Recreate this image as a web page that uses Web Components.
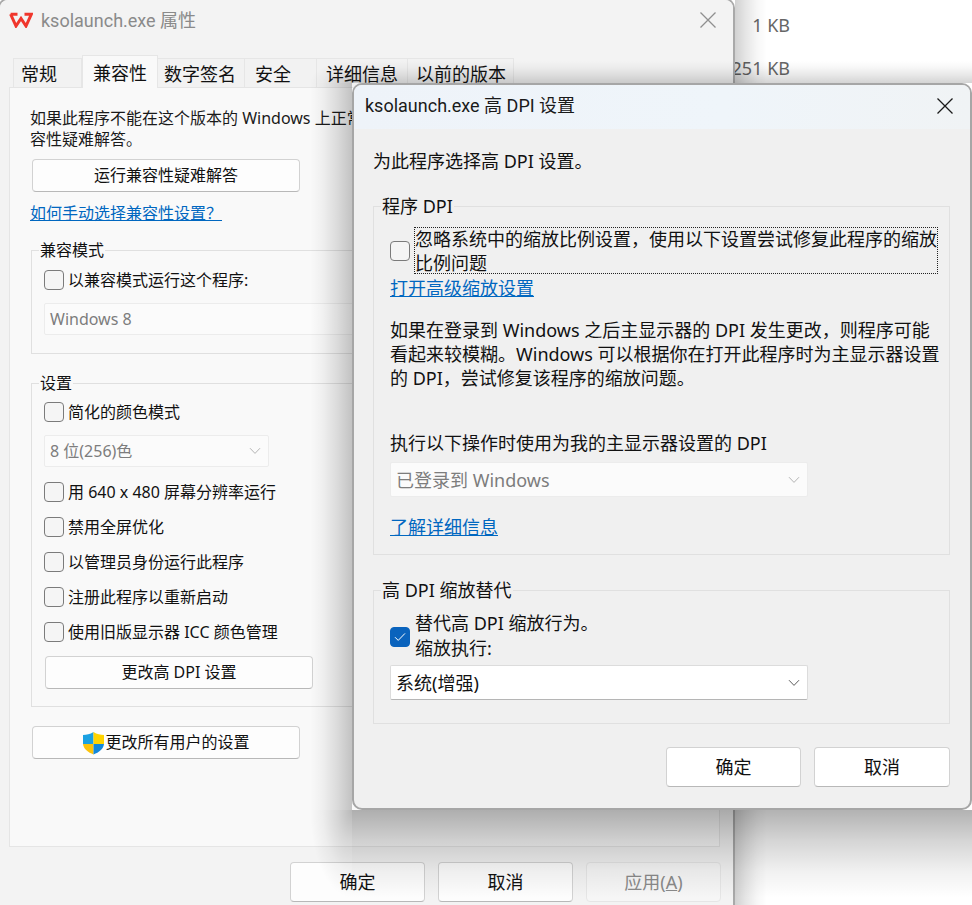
<!DOCTYPE html>
<html lang="zh">
<head>
<meta charset="utf-8">
<title>ksolaunch.exe</title>
<style>
  html, body { margin: 0; height: 905px; overflow: hidden; background: #fff; }
  body { position: relative; font-family: "Noto Sans", "Noto Sans CJK SC", sans-serif; color: #111; }
  .sizes { position: absolute; left: 690px; top: 0; width: 100px; text-align: right; font-size: 18px; color: #666; }
  .sizes div { height: 43px; line-height: 50px; }
</style>
</head>
<body>

<div class="sizes"><div>1 KB</div><div>251 KB</div></div>

<win-shadow style="--left:-2px;--top:-2px;--w:737px;--h:942px;--sl:0px;--st:0px;--sr:32px;--sb:0px;--a-top:.18;--a-tc:.18;--a-side:.18;--a-bc:.18;--a-bot:.18;--z:1"></win-shadow>

<!-- properties window, behind -->
<win-window style="--left:-2px;--top:-2px;--w:737px;--h:942px;--fs:16px;--lh:21px;--bg:#f3f3f3;--title-bg:#f3f3f3;--title-h:46px;--title-pb:6px;--title-color:#8a8a8a;--close:#8f8f8f;--title-pad:9px;--border:#a9a9a9;--z:2">
  <svg slot="icon" width="24" height="16" viewBox="0 0 24 16" style="margin-right:8px">
    <path d="M1.6 2.2H8.5M1.6 2.2L7 14L12 6.5L17 14L22.4 2.2H15.5" fill="none" stroke="#f0362c" stroke-width="3" stroke-linejoin="miter"/>
  </svg>
  <span slot="title">ksolaunch.exe 属性</span>

  <win-tabs>
    <win-tab style="--w:69px">常规</win-tab>
    <win-tab active style="--w:76px;--pad:10px">兼容性</win-tab>
    <win-tab style="--w:87px;--pad:6px">数字签名</win-tab>
    <win-tab style="--w:72px;--pad:10px">安全</win-tab>
    <win-tab style="--w:91px;--pad:9px">详细信息</win-tab>
    <win-tab style="--w:106px;--pad:8px">以前的版本</win-tab>
  </win-tabs>

  <tab-page>
    <div style="margin-left:20px;height:42px;white-space:nowrap;color:#1a1a1a">如果此程序不能在这个版本的 Windows 上正常<br>容性疑难解答。</div>
    <win-button style="--w:268px;--h:33px;margin:9px 0 0 22px">运行兼容性疑难解答</win-button>
    <win-link style="margin:11px 0 0 20px;font-size:16px;height:21px">如何手动选择兼容性设置？</win-link>

    <group-box legend="兼容模式" style="margin:26px 14px 0 21px;height:104px;--legend-left:7px">
      <win-check style="margin:19px 0 0 12px;--gap:4px">以兼容模式运行这个程序:</win-check>
      <win-select disabled style="--w:640px;--h:32px;margin:13px 0 0 12px">Windows 8</win-select>
    </group-box>

    <group-box legend="设置" style="margin:29px 14px 0 21px;height:324px;--legend-left:7px">
      <win-check style="margin:18px 0 0 12px">简化的颜色模式</win-check>
      <win-select disabled style="--w:225px;--h:32px;margin:13px 0 0 12px">8 位(256)色</win-select>
      <win-check style="margin:15px 0 0 12px">用 640 x 480 屏幕分辨率运行</win-check>
      <win-check style="margin:15px 0 0 12px">禁用全屏优化</win-check>
      <win-check style="margin:15px 0 0 12px">以管理员身份运行此程序</win-check>
      <win-check style="margin:15px 0 0 12px">注册此程序以重新启动</win-check>
      <win-check style="margin:15px 0 0 12px">使用旧版显示器 ICC 颜色管理</win-check>
      <win-button style="--w:268px;--h:33px;margin:14px 0 0 13px">更改高 DPI 设置</win-button>
    </group-box>

    <win-button style="--w:268px;--h:33px;margin:19px 0 0 22px">
      <svg width="23" height="24" viewBox="0 0 23 24">
        <path d="M11.5 1C8 3.2 4.5 4 1 4V13H11.5Z" fill="#1ba1e2"/>
        <path d="M11.5 1C15 3.2 18.5 4 22 4V13H11.5Z" fill="#ffd400"/>
        <path d="M1 13C1.6 18 6 21.4 11.5 23.4V13Z" fill="#fcc30b"/>
        <path d="M22 13C21.4 18 17 21.4 11.5 23.4V13Z" fill="#1188dc"/>
      </svg>更改所有用户的设置</win-button>
  </tab-page>

  <div style="display:flex;gap:13px;margin:15px 0 0 290px;font-size:18px">
    <win-button style="--w:135px;--h:40px">确定</win-button>
    <win-button style="--w:135px;--h:40px">取消</win-button>
    <win-button disabled style="--w:135px;--h:40px">应用(<u>A</u>)</win-button>
  </div>
</win-window>

<win-shadow style="--left:352px;--top:83px;--w:620px;--h:727px;--sl:42px;--st:22px;--sr:8px;--sb:88px;--a-top:.17;--a-tc:.195;--a-side:.22;--a-bc:.26;--a-bot:.3;--z:3"></win-shadow>

<!-- high dpi dialog, in front -->
<win-window style="--left:352px;--top:83px;--w:620px;--h:727px;--fs:18px;--lh:24px;--bg:#f0f0f0;--title-bg:linear-gradient(90deg,#eef3f9,#eff5fa 60%,#f0f3f5);--title-h:44px;--title-pb:3px;--title-color:#1a1a1a;--close:#1a1a1a;--title-pad:11px;--border:#a6a6a6;--z:4">
  <span slot="title">ksolaunch.exe 高 DPI 设置</span>

  <div style="margin:20px 0 0 19px;height:24px">为此程序选择高 DPI 设置。</div>

  <group-box legend="程序 DPI" style="margin:33px 20px 0 19px;height:349px;--legend-left:7px;--legend-bg:#f0f0f0">
    <div style="display:flex;align-items:center;margin:21px 0 0 16px">
      <win-check style="--gap:4px"></win-check>
      <div style="flex:none;width:524px;height:47px;box-sizing:border-box;border:1px dotted #222;line-height:23.5px;margin-top:-1px">忽略系统中的缩放比例设置，使用以下设置尝试修复此程序的缩放比例问题</div>
    </div>
    <win-link style="margin:2px 0 0 16px;font-size:18px;height:24px">打开高级缩放设置</win-link>
    <div style="margin:18px 0 0 16px;width:556px;height:72px">如果在登录到 Windows 之后主显示器的 DPI 发生更改，则程序可能看起来较模糊。Windows 可以根据你在打开此程序时为主显示器设置的 DPI，尝试修复该程序的缩放问题。</div>
    <div style="margin:41px 0 0 16px;height:24px">执行以下操作时使用为我的主显示器设置的 DPI</div>
    <win-select disabled style="--w:418px;--h:35px;margin:7px 0 0 16px">已登录到 Windows</win-select>
    <win-link style="margin:18px 0 0 16px;font-size:18px;height:24px">了解详细信息</win-link>
  </group-box>

  <group-box legend="高 DPI 缩放替代" style="margin:35px 20px 0 19px;height:134px;--legend-left:7px;--legend-bg:#f0f0f0">
    <div style="display:flex;align-items:center;margin:20px 0 0 16px">
      <win-check checked style="--gap:5px;margin-top:2px"></win-check>
      <div style="height:49px;line-height:24.5px">替代高 DPI 缩放行为。<br>缩放执行:</div>
    </div>
    <win-select style="--w:418px;--h:35px;margin:5px 0 0 16px">系统(增强)</win-select>
  </group-box>

  <div style="display:flex;justify-content:flex-end;gap:13px;margin:23px 20px 0 0">
    <win-button style="--w:135px;--h:40px;--btn-bg:#fff">确定</win-button>
    <win-button style="--w:136px;--h:40px;--btn-bg:#fff">取消</win-button>
  </div>
</win-window>

<script>
class WinWindow extends HTMLElement {
  constructor() {
    super();
    this.attachShadow({ mode: 'open' });
    this.shadowRoot.innerHTML = `
      <style>
        :host {
          display: block; position: absolute; box-sizing: border-box; overflow: hidden;
          left: var(--left); top: var(--top); width: var(--w); height: var(--h);
          z-index: var(--z);
          background: var(--bg); font-size: var(--fs); line-height: var(--lh);
          border: 2px solid var(--border); border-radius: 10px;
        }
        .bar {
          display: flex; align-items: center; box-sizing: border-box; height: var(--title-h);
          padding-left: var(--title-pad); padding-bottom: var(--title-pb); background: var(--title-bg);
          color: var(--title-color); font-size: 18px;
        }
        .title { flex: 1; white-space: nowrap; font-family: Roboto, "Noto Sans CJK SC", sans-serif; }
        .close { width: 18px; height: 18px; margin-right: 16px; }
        .close path { stroke: var(--close); stroke-width: 1.3; fill: none; }
      </style>
      <div class="bar">
        <slot name="icon"></slot>
        <div class="title"><slot name="title"></slot></div>
        <svg class="close" viewBox="0 0 18 18"><path d="M1.5 1.5L16.5 16.5M16.5 1.5L1.5 16.5"/></svg>
      </div>
      <slot></slot>`;
  }
}

// soft window shadow, drawn as gradient strips round the window's rectangle
const fade = a => [[1, 0], [.55, 35], [.18, 70], [0, 100]]
  .map(([k, p]) => `rgba(0,0,0,calc(var(${a}) * ${k})) ${p}%`).join(', ');

class WinShadow extends HTMLElement {
  constructor() {
    super();
    this.attachShadow({ mode: 'open' }).innerHTML = `
      <style>
        :host {
          display: grid; position: absolute; z-index: var(--z); pointer-events: none;
          left: calc(var(--left) - var(--sl)); top: calc(var(--top) - var(--st));
          grid-template-columns: var(--sl) var(--w) var(--sr);
          grid-template-rows: var(--st) var(--h) var(--sb);
        }
        .tl { background: radial-gradient(farthest-side at 100% 100%, ${fade('--a-tc')}); }
        .t  { background: linear-gradient(0deg, ${fade('--a-top')}); }
        .tr { background: radial-gradient(farthest-side at 0 100%, ${fade('--a-tc')}); }
        .l  { background: linear-gradient(270deg, ${fade('--a-side')}); }
        .r  { background: linear-gradient(90deg, ${fade('--a-side')}); }
        .bl { background: radial-gradient(farthest-side at 100% 0, ${fade('--a-bc')}); }
        .b  { background: linear-gradient(180deg, ${fade('--a-bot')}); }
        .br { background: radial-gradient(farthest-side at 0 0, ${fade('--a-bc')}); }
      </style>
      <div class="tl"></div><div class="t"></div><div class="tr"></div>
      <div class="l"></div><div></div><div class="r"></div>
      <div class="bl"></div><div class="b"></div><div class="br"></div>`;
  }
}

class WinTabs extends HTMLElement {
  constructor() {
    super();
    this.attachShadow({ mode: 'open' }).innerHTML = `
      <style>
        :host { display: flex; align-items: flex-end; height: 43px; padding-left: 13px; position: relative; z-index: 1; box-sizing: border-box; margin-top: -2px; }
      </style>
      <slot></slot>`;
  }
}

class WinTab extends HTMLElement {
  constructor() {
    super();
    this.attachShadow({ mode: 'open' }).innerHTML = `
      <style>
        :host {
          display: block; box-sizing: border-box; width: var(--w); height: 29px;
          font-size: 18px; line-height: 31px; padding-left: var(--pad, 7px); white-space: nowrap;
          background: #f2f2f2; border: 1px solid #e6e6e6; border-bottom: 0; border-left-width: 0; color: #111;
        }
        :host(:first-child) { border-left-width: 1px; }
        :host([active]) {
          height: 33px; line-height: 34px; background: #f9f9f9;
          border-left-width: 1px; margin-bottom: -1px;
        }
      </style>
      <slot></slot>`;
  }
}

class TabPage extends HTMLElement {
  constructor() {
    super();
    this.attachShadow({ mode: 'open' }).innerHTML = `
      <style>
        :host {
          display: block; box-sizing: border-box; margin-left: 9px; width: 711px; height: 760px;
          padding-top: 20px; background: #f9f9f9; border: 1px solid #e5e5e5;
        }
      </style>
      <slot></slot>`;
  }
}

class GroupBox extends HTMLElement {
  constructor() {
    super();
    this.attachShadow({ mode: 'open' }).innerHTML = `
      <style>
        :host { display: block; box-sizing: border-box; position: relative; border: 1px solid #e0e0e0; }
        .legend {
          position: absolute; left: var(--legend-left); top: -13px; padding: 0 1px; height: 24px; line-height: 24px;
          background: var(--legend-bg, #f9f9f9); white-space: nowrap;
        }
        .body { display: flow-root; }
      </style>
      <div class="legend"></div>
      <div class="body"><slot></slot></div>`;
    this.shadowRoot.querySelector('.legend').textContent = this.getAttribute('legend');
  }
}

class WinCheck extends HTMLElement {
  constructor() {
    super();
    this.attachShadow({ mode: 'open' }).innerHTML = `
      <style>
        :host { display: flex; align-items: center; height: 20px; white-space: nowrap; }
        .box {
          box-sizing: border-box; flex: none; width: 20px; height: 20px; margin-right: var(--gap, 4px);
          border: 1px solid #7b7b7b; border-radius: 4px; background: #f5f5f5;
          display: flex; align-items: center; justify-content: center;
        }
        :host([checked]) .box { background: #0a63bd; border-color: #0a63bd; }
        svg { display: none; }
        :host([checked]) svg { display: block; }
      </style>
      <div class="box"><svg width="12" height="10" viewBox="0 0 12 10"><path d="M1 5.2L4.2 8.4L11 1.4" fill="none" stroke="#fff" stroke-width="1"/></svg></div>
      <slot></slot>`;
  }
}

class WinButton extends HTMLElement {
  constructor() {
    super();
    this.attachShadow({ mode: 'open' }).innerHTML = `
      <style>
        :host {
          display: flex; align-items: center; justify-content: center; box-sizing: border-box; flex: none;
          width: var(--w); height: var(--h); white-space: nowrap; color: #111;
          background: var(--btn-bg, #fdfdfd); border: 1px solid #d2d2d2; border-bottom-color: #b8b8b8; border-radius: 4px;
        }
        :host([disabled]) { background: #f6f6f6; border-color: #e6e6e6; color: #8a8a8a; }
      </style>
      <slot></slot>`;
  }
}

class WinSelect extends HTMLElement {
  constructor() {
    super();
    this.attachShadow({ mode: 'open' }).innerHTML = `
      <style>
        :host {
          display: flex; align-items: center; box-sizing: border-box; width: var(--w); height: var(--h);
          padding-left: 5px; white-space: nowrap; color: #111;
          background: #fff; border: 1px solid #dcdcdc; border-bottom-color: #b5b5b5; border-radius: 2px;
        }
        :host([disabled]) { background: #fbfbfb; border-color: #ececec; color: #7d7d7d; }
        .text { flex: 1; }
        svg { margin-right: 7px; }
        path { stroke: #5c5c5c; }
        :host([disabled]) path { stroke: #b4b4b4; }
      </style>
      <div class="text"><slot></slot></div>
      <svg width="12" height="8" viewBox="0 0 12 8"><path d="M1 1.2L6 6.4L11 1.2" fill="none" stroke-width="1"/></svg>`;
  }
}

class WinLink extends HTMLElement {
  constructor() {
    super();
    this.attachShadow({ mode: 'open' }).innerHTML = `
      <style>
        :host { display: block; white-space: nowrap; color: #0067c0; text-decoration: underline; }
      </style>
      <slot></slot>`;
  }
}

customElements.define('win-window', WinWindow);
customElements.define('win-shadow', WinShadow);
customElements.define('win-tabs', WinTabs);
customElements.define('win-tab', WinTab);
customElements.define('tab-page', TabPage);
customElements.define('group-box', GroupBox);
customElements.define('win-check', WinCheck);
customElements.define('win-button', WinButton);
customElements.define('win-select', WinSelect);
customElements.define('win-link', WinLink);
</script>
</body>
</html>
